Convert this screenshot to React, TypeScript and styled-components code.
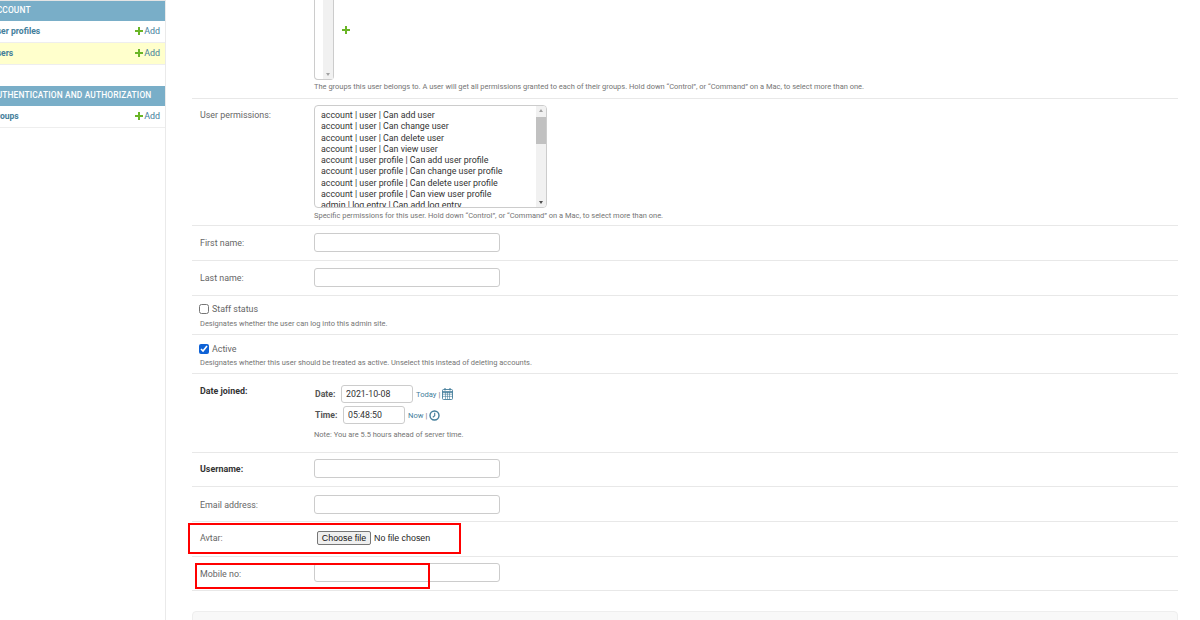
import React from "react";
import styled, { createGlobalStyle } from "styled-components";

const GlobalStyle = createGlobalStyle`
  html, body {
    margin: 0;
    padding: 0;
    height: 620px;
    overflow: hidden;
    background: #fff;
    font-family: Roboto, "Liberation Sans", Arial, sans-serif;
    color: #333;
  }
`;

const Page = styled.div`
  display: flex;
  width: 1200px;
  height: 620px;
  overflow: hidden;
`;

const Sidebar = styled.nav`
  width: 166px;
  flex: none;
  border-right: 1px solid #eaeaea;
  overflow: hidden;
  border-top: 1px solid #e4e4e4;
  box-sizing: border-box;
`;

const SidebarInner = styled.div`
  margin-left: -17px;
`;

const ModuleBlock = styled.section`
  margin-bottom: 21px;
`;

const Caption = styled.div`
  height: 20px;
  line-height: 19px;
  padding-left: 8px;
  background: #79aec8;
  color: #fff;
  font-size: 8.4px;
  font-weight: 500;
  letter-spacing: 0.15px;
  white-space: nowrap;
`;

const ModelRow = styled.div<{ $current?: boolean }>`
  display: flex;
  align-items: center;
  justify-content: space-between;
  box-sizing: content-box;
  height: 20px;
  padding: 0 5px 1px 8px;
  border-bottom: 1px solid #eee;
  background: ${(p) => (p.$current ? "#ffc" : "#fff")};
  font-size: 8.9px;
`;

const ModelName = styled.a`
  color: #447e9b;
  font-size: 8.6px;
  font-weight: 700;
`;

const AddLink = styled.a`
  display: flex;
  align-items: center;
  gap: 1px;
  color: #447e9b;
`;

const Main = styled.main`
  flex: 1;
  min-width: 0;
  padding: 0 22px 0 26px;
`;

const Row = styled.div<{ $h: number; $top?: number }>`
  display: flex;
  box-sizing: border-box;
  height: ${(p) => p.$h}px;
  padding: ${(p) => p.$top ?? 7}px 0 0 8px;
  border-bottom: 1px solid #e8e8e8;
  font-size: 8.9px;
  color: #666;
`;

const Label = styled.label<{ $strong?: boolean; $pad?: number }>`
  flex: none;
  width: 114px;
  padding-top: ${(p) => p.$pad ?? 4}px;
  line-height: 13px;
  font-weight: ${(p) => (p.$strong ? 700 : 400)};
  color: ${(p) => (p.$strong ? "#333" : "#666")};
`;

const Field = styled.div`
  display: flex;
  flex-direction: column;
  min-width: 0;
`;

const Help = styled.p<{ $gap?: number }>`
  margin: ${(p) => p.$gap ?? 0}px 0 0;
  font-size: 7.47px;
  line-height: 11px;
  color: #757575;
  white-space: nowrap;
`;

const TextBox = styled.input`
  box-sizing: border-box;
  width: 186px;
  height: 19px;
  padding: 0 4px;
  border: 1px solid #ccc;
  border-radius: 3px;
  background: #fff;
  outline: none;
  font: 8.9px Roboto, sans-serif;
  color: #333;
`;

const GroupLine = styled.div`
  display: flex;
  align-items: flex-start;
  gap: 8px;
  height: 80px;
`;

const CutSelect = styled.div`
  display: flex;
  justify-content: flex-end;
  box-sizing: border-box;
  width: 20px;
  height: 80px;
  border: 1px solid #ccc;
  border-top: none;
  border-radius: 0 0 4px 4px;
`;

const Track = styled.div`
  position: relative;
  flex: none;
  width: 10px;
  height: 100%;
  background: #f1f1f1;
`;

const Arrow = styled.span<{ $up?: boolean; $dim?: boolean }>`
  position: absolute;
  left: 2.5px;
  ${(p) => (p.$up ? "top: 3px;" : "bottom: 3px;")}
  width: 0;
  height: 0;
  border-left: 2.5px solid transparent;
  border-right: 2.5px solid transparent;
  ${(p) => (p.$up ? "border-bottom" : "border-top")}: 3px solid ${(p) =>
    p.$dim ? "#a3a3a3" : "#505050"};
`;

const Thumb = styled.span`
  position: absolute;
  left: 0;
  right: 0;
  top: 11px;
  height: 27px;
  background: #c1c1c1;
`;

const PlusSlot = styled.span`
  margin-top: 26px;
  line-height: 0;
`;

const ListBox = styled.div`
  display: flex;
  box-sizing: border-box;
  width: 233px;
  height: 103px;
  border: 1px solid #ccc;
  border-radius: 4px;
  overflow: hidden;
`;

const OptionList = styled.div`
  flex: 1;
  min-width: 0;
  padding: 4px 0 0 6px;
  overflow: hidden;
`;

const Option = styled.div`
  height: 11.25px;
  line-height: 11.25px;
  font-size: 8.85px;
  color: #333;
  white-space: nowrap;
`;

const CheckLine = styled.label`
  display: flex;
  align-items: center;
  gap: 3px;
  height: 13px;
  margin: 1px 0 0 -1px;
  line-height: 13px;
  color: #666;
`;

const CheckBox = styled.input`
  width: 10px;
  height: 10px;
  margin: 0 0 1px;
  accent-color: #0f62d6;
`;

const Stacked = styled.div`
  display: flex;
  flex-direction: column;
`;

const DateLine = styled.div`
  display: flex;
  align-items: center;
  height: 18px;
  margin-bottom: 3px;
  font-size: 8.7px;
`;

const DateLabel = styled.span<{ $w: number }>`
  width: ${(p) => p.$w}px;
  padding-left: 1px;
  box-sizing: border-box;
  font-weight: 700;
  color: #555;
`;

const DateBox = styled(TextBox)<{ $w: number }>`
  width: ${(p) => p.$w}px;
  height: 18px;
  margin-right: 3px;
  font-size: 8.8px;
`;

const Shortcut = styled.a`
  margin-right: 2px;
  font-size: 7.6px;
  color: #447e9b;
`;

const Sep = styled.span`
  margin-right: 2px;
  font-size: 7.6px;
  color: #777;
`;

const FileLine = styled.div`
  display: flex;
  align-items: center;
  gap: 3px;
  height: 14px;
  margin: 2px 0 0 3px;
  font: 8.9px "Liberation Sans", Arial, sans-serif;
  color: #222;
`;

const FileButton = styled.button`
  box-sizing: border-box;
  width: 54px;
  height: 14px;
  padding: 0;
  border: 1px solid #767676;
  border-radius: 2px;
  background: #efefef;
  font: 8.9px "Liberation Sans", Arial, sans-serif;
  color: #111;
`;

const FormArea = styled.div`
  position: relative;
`;

const Callout = styled.div<{ $l: number; $t: number; $w: number; $h: number }>`
  position: absolute;
  left: ${(p) => p.$l}px;
  top: ${(p) => p.$t}px;
  width: ${(p) => p.$w}px;
  height: ${(p) => p.$h}px;
  box-sizing: border-box;
  border: 2px solid #f00;
  pointer-events: none;
`;

const SubmitRow = styled.div`
  height: 40px;
  margin-top: 20px;
  border: 1px solid #eee;
  border-radius: 4px;
  background: #f8f8f8;
`;

const Plus = () => (
  <svg width="8" height="8" viewBox="0 0 8 8">
    <path d="M3 0h2v3h3v2H5v3H3V5H0V3h3z" fill="#6ab526" />
  </svg>
);

const CalendarIcon = () => (
  <svg width="11" height="12" viewBox="0 0 11 12" fill="none" stroke="#447e9b">
    <rect x="0.5" y="1.5" width="10" height="10" rx="1" strokeWidth="0.9" />
    <path d="M0.5 4h10" strokeWidth="1.6" />
    <path d="M3 0v2.5M8 0v2.5" strokeWidth="1.1" />
    <path d="M3.5 4v7M5.5 4v7M7.5 4v7M.5 6.2h10M.5 8.4h10" strokeWidth="0.6" />
  </svg>
);

const ClockIcon = () => (
  <svg width="11" height="11" viewBox="0 0 11 11" fill="none" stroke="#447e9b">
    <circle cx="5.5" cy="5.5" r="4.5" strokeWidth="1.4" />
    <path d="M5.7 2.8v3L3.8 7.2" strokeWidth="1.1" />
  </svg>
);

const permissions = [
  "account | user | Can add user",
  "account | user | Can change user",
  "account | user | Can delete user",
  "account | user | Can view user",
  "account | user profile | Can add user profile",
  "account | user profile | Can change user profile",
  "account | user profile | Can delete user profile",
  "account | user profile | Can view user profile",
  "admin | log entry | Can add log entry",
];

const modules = [
  {
    title: "ACCOUNT",
    models: [
      { name: "User profiles", current: false },
      { name: "Users", current: true },
    ],
  },
  {
    title: "AUTHENTICATION AND AUTHORIZATION",
    models: [{ name: "Groups", current: false }],
  },
];

export default function App() {
  return (
    <Page>
      <GlobalStyle />
      <Sidebar>
        <SidebarInner>
          {modules.map((mod) => (
            <ModuleBlock key={mod.title}>
              <Caption>{mod.title}</Caption>
              {mod.models.map((model) => (
                <ModelRow key={model.name} $current={model.current}>
                  <ModelName>{model.name}</ModelName>
                  <AddLink>
                    <Plus />
                    Add
                  </AddLink>
                </ModelRow>
              ))}
            </ModuleBlock>
          ))}
        </SidebarInner>
      </Sidebar>

      <Main>
        <FormArea>
          <Row $h={99} $top={0}>
            <Label />
            <Field>
              <GroupLine>
                <CutSelect>
                  <Track>
                    <Arrow $dim />
                  </Track>
                </CutSelect>
                <PlusSlot>
                  <Plus />
                </PlusSlot>
              </GroupLine>
              <Help $gap={1}>
                The groups this user belongs to. A user will get all permissions granted to each of
                their groups. Hold down “Control”, or “Command” on a Mac, to select more than one.
              </Help>
            </Field>
          </Row>

          <Row $h={127} $top={6}>
            <Label>User permissions:</Label>
            <Field>
              <ListBox>
                <OptionList>
                  {permissions.map((perm) => (
                    <Option key={perm}>{perm}</Option>
                  ))}
                </OptionList>
                <Track>
                  <Arrow $up $dim />
                  <Thumb />
                  <Arrow />
                </Track>
              </ListBox>
              <Help $gap={2}>
                Specific permissions for this user. Hold down “Control”, or “Command” on a Mac, to
                select more than one.
              </Help>
            </Field>
          </Row>

          <Row $h={35}>
            <Label>First name:</Label>
            <TextBox readOnly />
          </Row>
          <Row $h={35}>
            <Label>Last name:</Label>
            <TextBox readOnly />
          </Row>

          <Row $h={39} $top={6}>
            <Stacked>
              <CheckLine>
                <CheckBox type="checkbox" readOnly />
                Staff status
              </CheckLine>
              <Help $gap={2}>Designates whether the user can log into this admin site.</Help>
            </Stacked>
          </Row>
          <Row $h={39}>
            <Stacked>
              <CheckLine>
                <CheckBox type="checkbox" checked readOnly />
                Active
              </CheckLine>
              <Help $gap={1}>
                Designates whether this user should be treated as active. Unselect this instead of
                deleting accounts.
              </Help>
            </Stacked>
          </Row>

          <Row $h={79} $top={11}>
            <Label $strong $pad={0}>
              Date joined:
            </Label>
            <Field>
              <DateLine>
                <DateLabel $w={27}>Date:</DateLabel>
                <DateBox $w={72} readOnly value="2021-10-08" />
                <Shortcut>Today</Shortcut>
                <Sep>|</Sep>
                <CalendarIcon />
              </DateLine>
              <DateLine>
                <DateLabel $w={29}>Time:</DateLabel>
                <DateBox $w={62} readOnly value="05:48:50" />
                <Shortcut>Now</Shortcut>
                <Sep>|</Sep>
                <ClockIcon />
              </DateLine>
              <Help $gap={2}>Note: You are 5.5 hours ahead of server time.</Help>
            </Field>
          </Row>

          <Row $h={34} $top={6}>
            <Label $strong>Username:</Label>
            <TextBox readOnly />
          </Row>
          <Row $h={35} $top={8}>
            <Label>Email address:</Label>
            <TextBox readOnly />
          </Row>
          <Row $h={35}>
            <Label $pad={3}>Avtar:</Label>
            <FileLine>
              <FileButton type="button">Choose file</FileButton>
              No file chosen
            </FileLine>
          </Row>
          <Row $h={34} $top={6}>
            <Label $pad={5}>Mobile no:</Label>
            <TextBox readOnly />
          </Row>

          <Callout $l={-4} $t={523} $w={273} $h={31} />
          <Callout $l={3} $t={563} $w={235} $h={26} />
        </FormArea>
        <SubmitRow />
      </Main>
    </Page>
  );
}
